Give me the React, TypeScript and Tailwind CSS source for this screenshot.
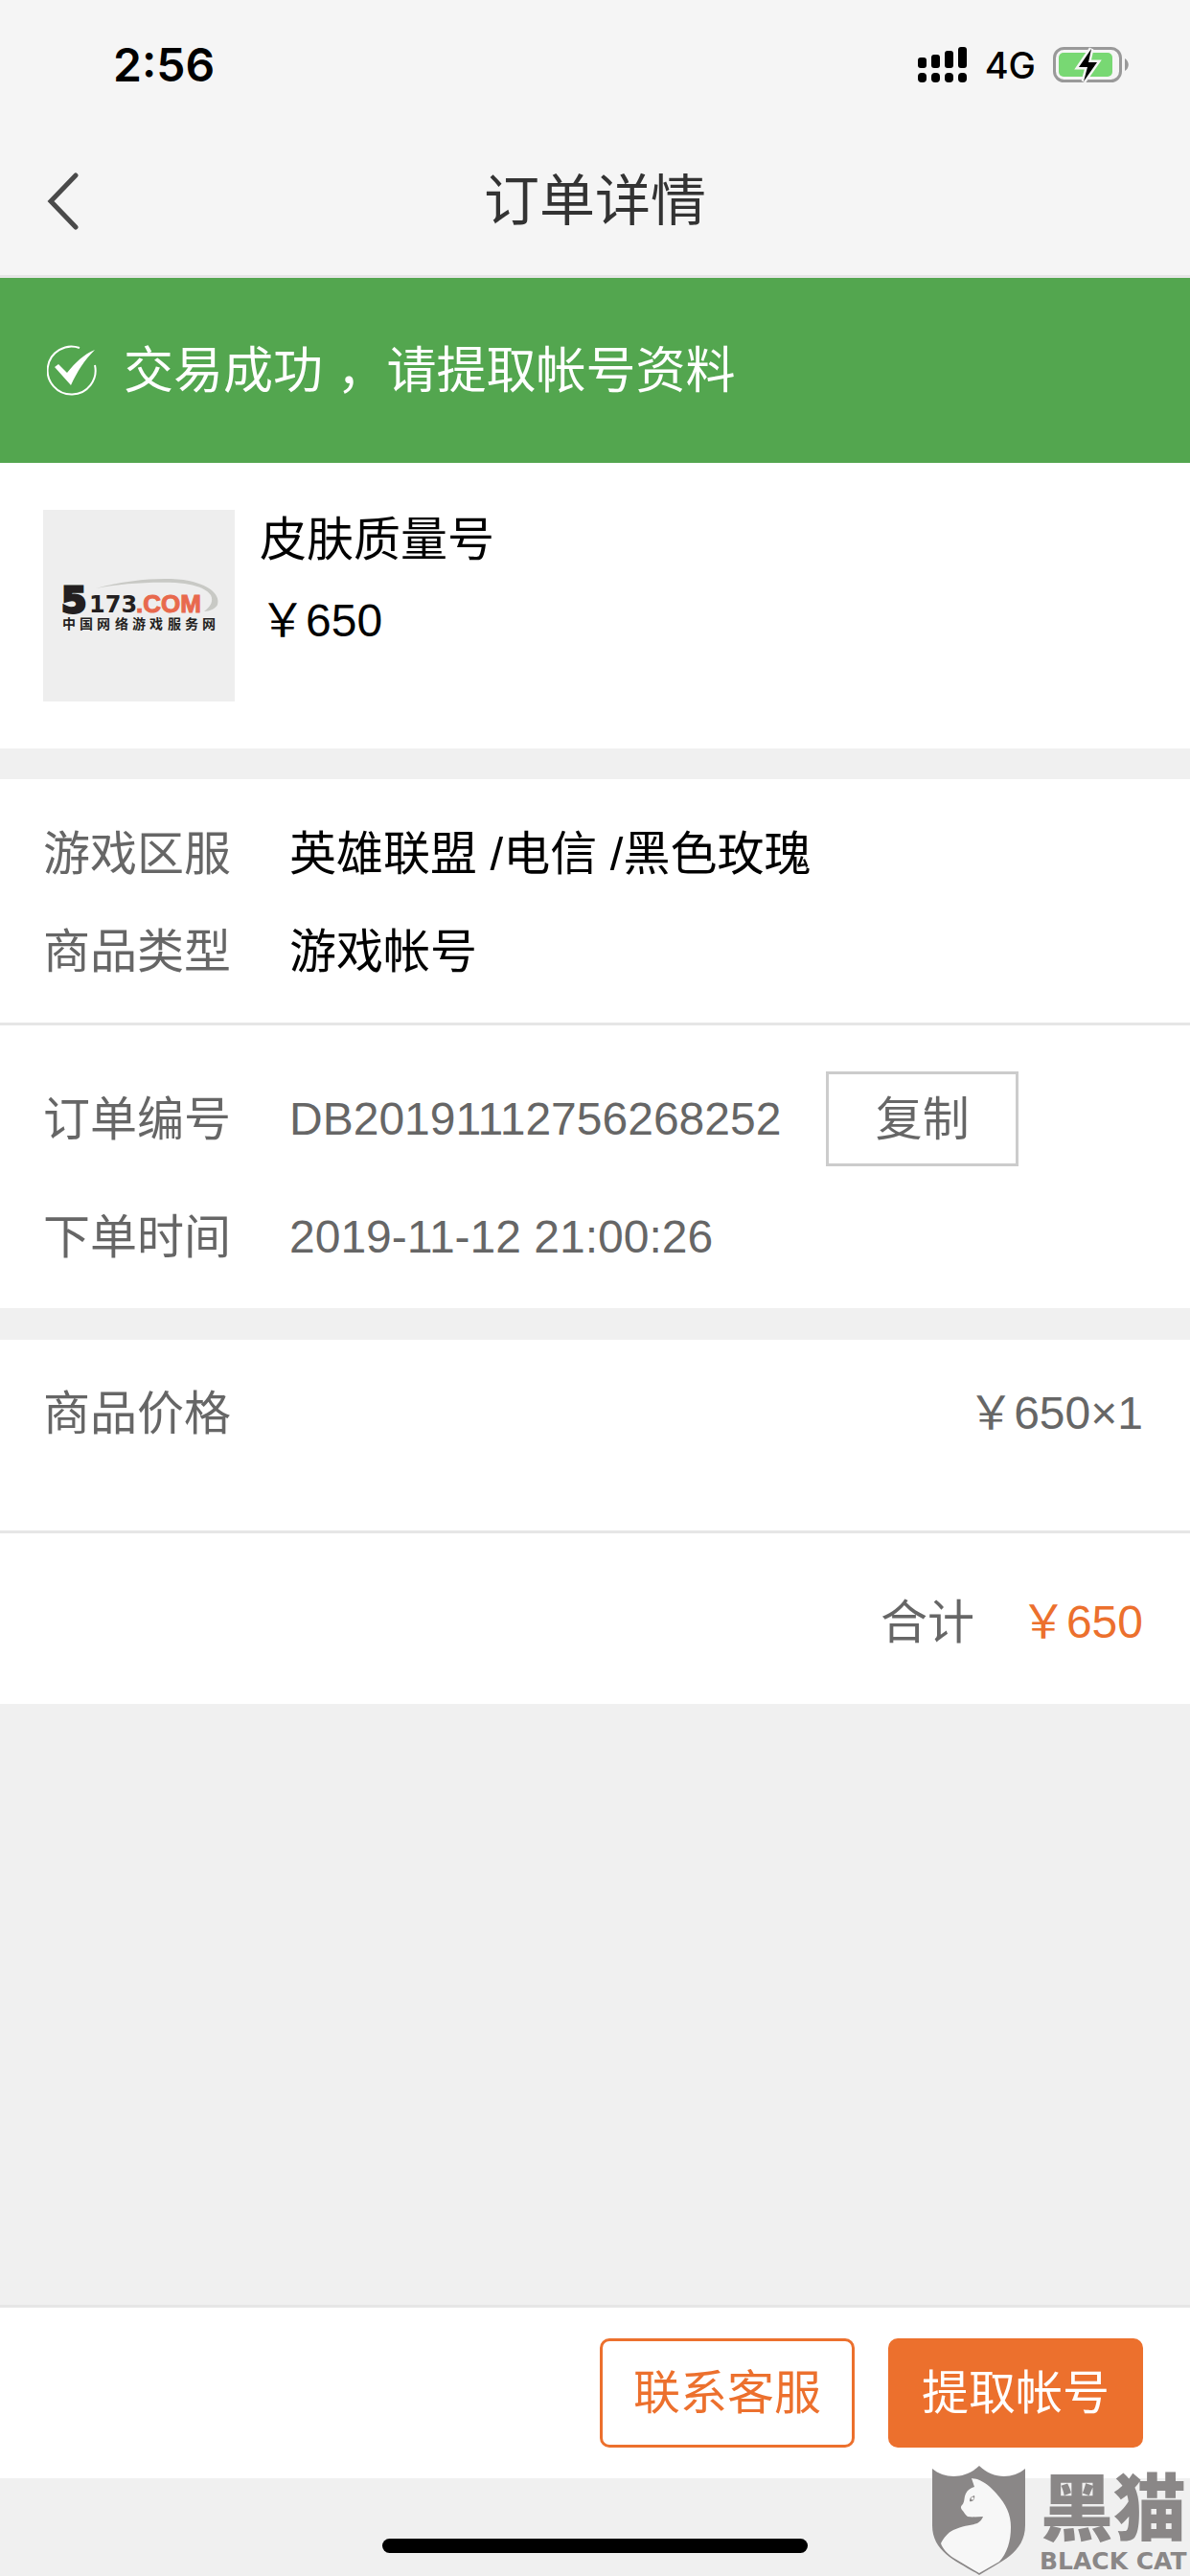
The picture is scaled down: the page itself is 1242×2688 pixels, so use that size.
import React from 'react';

interface RowProps {
  label: string;
  children: React.ReactNode;
}

const StatusBar = () => {
  return (
    <div className="flex h-[136px] items-center justify-between pl-[118px] pr-[63px] font-['Inter',sans-serif] text-black">
      <span className="text-[48px] font-semibold leading-[62px]">2:56</span>
      <div className="flex items-center gap-[18px]">
        <svg className="h-[38px] w-[52px]" viewBox="0 0 52 38" aria-hidden="true">
          <rect x="0" y="11" width="9" height="11" rx="3" />
          <rect x="14" y="8" width="9" height="14" rx="3" />
          <rect x="28" y="4" width="9" height="18" rx="3" />
          <rect x="42" y="0" width="9" height="22" rx="3" />
          <rect x="0" y="27" width="9" height="10" rx="4" />
          <rect x="14" y="27" width="9" height="10" rx="4" />
          <rect x="28" y="27" width="9" height="10" rx="4" />
          <rect x="42" y="27" width="9" height="10" rx="4" />
        </svg>
        <span className="text-[38px] font-medium leading-[62px]">4G</span>
        <svg className="h-[38px] w-[80px]" viewBox="0 0 80 38" aria-hidden="true">
          <rect x="1.5" y="1.5" width="69" height="34" rx="10" fill="none" stroke="#999" strokeWidth="3" />
          <rect x="6" y="6" width="56" height="25" rx="5" fill="#78d873" />
          <path d="M75 12 C80 15 80 22 75 25Z" fill="#999" />
          <path
            d="M40 2 L27 21 H36 L32 36 L46 16 H37Z"
            fill="#000"
            stroke="#f5f5f5"
            strokeWidth="5"
            paintOrder="stroke"
          />
        </svg>
      </div>
    </div>
  );
};

const Header = () => {
  return (
    <header className="border-b-[3px] border-[#e6e6e6] bg-[#f5f5f5]">
      <StatusBar />
      <div className="grid h-[151px] grid-cols-[100px_1fr_100px] items-center pb-1">
        <button type="button" aria-label="返回" className="flex h-full items-center pl-[49px]">
          <svg className="h-[60px] w-[34px]" viewBox="0 0 34 60" fill="none" stroke="#4a4a4a" strokeWidth="5" strokeLinecap="round">
            <path d="M30 3 L4 30 L30 57" />
          </svg>
        </button>
        <h1 className="text-center text-[58px] leading-[80px] text-[#333]">订单详情</h1>
      </div>
    </header>
  );
};

const ShopLogo = () => {
  return (
    <svg className="size-[200px] shrink-0 bg-[#eee]" viewBox="0 0 200 200" role="img" aria-label="5173.COM">
      <path d="M55 82 C92 72 130 70 152 74 C176 79 185 90 182 99 C180 103 174 106 168 106 C175 101 178 95 175 89 C168 79 150 77 138 76 C110 75 80 77 55 82Z" fill="#c8c9c5" />
      <text x="19" y="107" fontFamily="DejaVu Sans" fontWeight="700" fontSize="38" fill="#231f20" stroke="#231f20" strokeWidth="3">5</text>
      <text x="48" y="107" fontFamily="DejaVu Sans" fontWeight="700" fontSize="24" fill="#231f20">173</text>
      <text x="97" y="107" fontFamily="Liberation Sans" fontWeight="700" fontSize="26" fill="#e8694d" stroke="#e8694d">.COM</text>
      <text x="20 38 56 75 93 111 130 148 166" y="124" fontFamily="Noto Sans CJK SC" fontWeight="700" fontSize="14" fill="#231f20">
        中国网络游戏服务网
      </text>
    </svg>
  );
};

const Row = ({ label, children }: RowProps) => {
  return (
    <div className="flex items-center">
      <dt className="w-[257px] shrink-0 text-[#666]">{label}</dt>
      <dd className="flex items-center">{children}</dd>
    </div>
  );
};

const BlackCat = () => {
  return (
    <div className="absolute bottom-0 right-0 flex text-[#8a8787]">
      <svg className="h-[140px] w-[270px]" viewBox="0 -24 270 140" role="img" aria-label="黑猫 BLACK CAT">
        <path d="M1 4 C14 15 36 15 50 1 C64 15 85 15 98 4 V63 C98 92 72 101 50 115 C28 101 1 92 1 63Z" fill="currentColor" />
        <path
          d="M42 14 L48 15 C56 18 62 23 68 30 C78 41 83 52 83 65 C83 80 79 92 71 101 L50 113 L23 97 C17 93 12 88 10 82 C13 76 17 71 23 68 C33 63 43 63 48 61 C51 59 53 57 54 54 C48 54 43 55 38 54 C36 53 34 49 32 47 C30 44 31 43 33 41 C35 37 34 34 36 30 C38 26 41 24 45 23Z"
          fill="#f7f7f7"
        />
        <path d="M40 38 C40 33 43 33 45 32 C46 36 43 39 40 38Z" fill="currentColor" />
        <circle cx="43" cy="35" r="1.5" fill="#f7f7f7" />
        <text x="114" y="73" fontFamily="Noto Sans CJK SC" fontWeight="900" fontSize="76" fill="currentColor">黑猫</text>
        <text x="113" y="109" fontFamily="DejaVu Sans" fontWeight="700" fontSize="25" fill="currentColor">BLACK CAT</text>
      </svg>
    </div>
  );
};

const App = () => {
  return (
    <div className="relative flex min-h-screen flex-col bg-[#f0f0f0] font-['Liberation_Sans','Noto_Sans_CJK_SC',sans-serif] text-[49px] leading-[62px] text-black">
      <Header />

      <div className="flex h-[193px] items-center bg-[#53a64f] pl-[49px] text-[52px] text-white">
        <svg className="mr-[27px] size-[53px]" viewBox="0 0 53 53" aria-hidden="true">
          <path d="M34 3 A25 25 0 1 0 50 21" fill="none" stroke="#fff" strokeWidth="2" />
          <path d="M8 23 L12 20 L21 29 C30 18 38 10 50 5 C39 16 32 27 25 42Z" fill="#fff" />
        </svg>
        <p>交易成功 ，请提取帐号资料</p>
      </div>

      <main className="grow">
        <section className="flex gap-[26px] bg-white px-[45px] py-[49px]">
          <ShopLogo />
          <div className="flex flex-col gap-[23px]">
            <h2>皮肤质量号</h2>
            <p className="text-[48px]">￥650</p>
          </div>
        </section>

        <dl className="mt-8 flex flex-col gap-[40px] border-b-[3px] border-[#e6e6e6] bg-white px-[45px] pb-[43px] pt-[47px]">
          <Row label="游戏区服">英雄联盟 /电信 /黑色玫瑰</Row>
          <Row label="商品类型">游戏帐号</Row>
        </dl>
        <dl className="flex flex-col gap-[43px] bg-white px-[45px] pb-[43px] pt-[48px] text-[#666]">
          <Row label="订单编号">
            <span className="text-[48px]">DB20191112756268252</span>
            <button type="button" className="ml-[47px] h-[99px] w-[201px] border-[3px] border-[#ccc]">
              复制
            </button>
          </Row>
          <Row label="下单时间">
            <span className="text-[48px]">2019-11-12 21:00:26</span>
          </Row>
        </dl>

        <section className="mt-[33px] bg-white text-[#666]">
          <div className="flex justify-between border-b-[3px] border-[#e6e6e6] pb-[91px] pl-[45px] pr-[49px] pt-[46px]">
            <span>商品价格</span>
            <span className="text-[48px]">￥650×1</span>
          </div>
          <div className="flex justify-end gap-[48px] pb-[54px] pr-[49px] pt-[62px]">
            <span>合计</span>
            <span className="text-[48px] text-[#ec702d]">￥650</span>
          </div>
        </section>
      </main>

      <footer>
        <div className="flex justify-end gap-[35px] border-t-[3px] border-[#e6e6e6] bg-white py-[32px] pr-[49px]">
          <button type="button" className="h-[114px] w-[266px] rounded-[10px] border-[3px] border-[#ec702d] text-[#ec702d]">
            联系客服
          </button>
          <button type="button" className="h-[114px] w-[266px] rounded-[10px] bg-[#ec702d] text-white">
            提取帐号
          </button>
        </div>
        <div className="flex justify-center pb-6 pt-[63px]">
          <div className="h-[15px] w-[444px] rounded-full bg-black"></div>
        </div>
      </footer>

      <BlackCat />
    </div>
  );
};

export default App;
